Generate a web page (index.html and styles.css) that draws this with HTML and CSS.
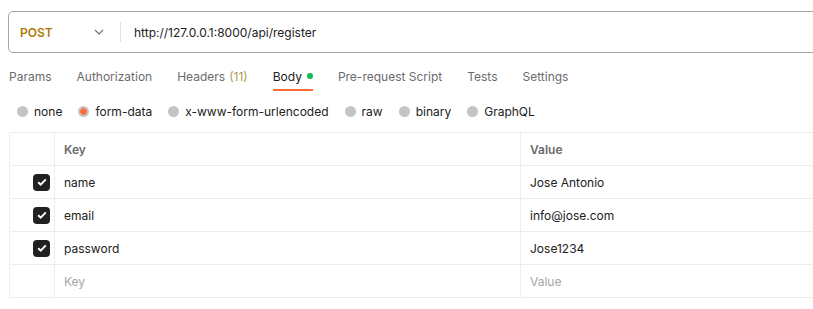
FILE: index.html
```html
<!DOCTYPE html>
<html lang="en">
<head>
  <meta charset="UTF-8">
  <meta name="viewport" content="width=device-width, initial-scale=1.0">
  <title>POST register</title>
  <link rel="stylesheet" href="styles.css">
</head>
<body>
  <div class="request-bar">
    <div class="method">
      <span class="method-name">POST</span>
      <svg class="chevron" width="10" height="6" viewBox="0 0 10 6"><path d="M1 1l4 4 4-4" fill="none" stroke="#6b6b6b" stroke-width="1.1"/></svg>
    </div>
    <div class="url">http://127.0.0.1:8000/api/register</div>
  </div>

  <div class="tabs">
    <span class="tab">Params</span>
    <span class="tab">Authorization</span>
    <span class="tab">Headers <span class="count">(11)</span></span>
    <span class="tab active">Body <span class="dot"></span></span>
    <span class="tab">Pre-request Script</span>
    <span class="tab">Tests</span>
    <span class="tab">Settings</span>
  </div>

  <div class="body-types">
    <label class="radio"><span class="circle"></span>none</label>
    <label class="radio selected"><span class="circle"></span>form-data</label>
    <label class="radio"><span class="circle"></span>x-www-form-urlencoded</label>
    <label class="radio"><span class="circle"></span>raw</label>
    <label class="radio"><span class="circle"></span>binary</label>
    <label class="radio"><span class="circle"></span>GraphQL</label>
  </div>

  <div class="params">
    <div class="row head">
      <div class="cell check"></div>
      <div class="cell key">Key</div>
      <div class="cell value">Value</div>
    </div>
    <div class="row">
      <div class="cell check"><span class="box"><svg width="10" height="8" viewBox="0 0 10 8"><path d="M1.2 4.2l2.5 2.4L8.8 1.4" fill="none" stroke="#fff" stroke-width="2"/></svg></span></div>
      <div class="cell key">name</div>
      <div class="cell value">Jose Antonio</div>
    </div>
    <div class="row">
      <div class="cell check"><span class="box"><svg width="10" height="8" viewBox="0 0 10 8"><path d="M1.2 4.2l2.5 2.4L8.8 1.4" fill="none" stroke="#fff" stroke-width="2"/></svg></span></div>
      <div class="cell key">email</div>
      <div class="cell value">info@jose.com</div>
    </div>
    <div class="row">
      <div class="cell check"><span class="box"><svg width="10" height="8" viewBox="0 0 10 8"><path d="M1.2 4.2l2.5 2.4L8.8 1.4" fill="none" stroke="#fff" stroke-width="2"/></svg></span></div>
      <div class="cell key">password</div>
      <div class="cell value">Jose1234</div>
    </div>
    <div class="row empty">
      <div class="cell check"></div>
      <div class="cell key">Key</div>
      <div class="cell value">Value</div>
    </div>
  </div>
</body>
</html>
```

FILE: styles.css
```css
body {
  font-family: 'Inter', 'Liberation Sans', sans-serif;
  font-size: 12px;
  color: #212121;
  background: #fff;
  margin: 0;
  padding: 11px 0 0 8px;
  overflow: hidden;
}
.request-bar {
  display: flex;
  align-items: center;
  height: 40px;
  margin-right: -10px;
  border: 1px solid #a6a6a6;
  border-radius: 5px;
}
.method {
  display: flex;
  align-items: center;
  justify-content: space-between;
  width: 84px;
  height: 20px;
  padding: 0 16px 0 11px;
  border-right: 1px solid #e0e0e0;
}
.method-name {
  font-weight: 600;
  color: #ad7a03;
}
.url {
  padding-left: 13px;
}
.tabs {
  display: flex;
  height: 28px;
  margin-top: 10px;
  padding-left: 1px;
}
.tab {
  display: flex;
  align-items: center;
  margin-right: 25px;
  color: #6b6b6b;
  border-bottom: 2px solid transparent;
}
.tab .count {
  color: #a99a4b;
  margin-left: 4px;
}
.tab.active {
  color: #212121;
  border-bottom-color: #ff6c37;
}
.dot {
  width: 6px;
  height: 6px;
  margin-left: 5px;
  border-radius: 50%;
  background: #0cbb52;
}
.body-types {
  display: flex;
  align-items: center;
  height: 41px;
  padding-left: 9px;
}
.radio {
  display: flex;
  align-items: center;
  margin-right: 16px;
  color: #212121;
}
.circle {
  width: 11px;
  height: 11px;
  margin-right: 6px;
  border-radius: 50%;
  background: #c4c4c4;
}
.radio.selected .circle {
  background: radial-gradient(circle, #ff6c37 0 3px, #c4c4c4 3.6px);
}
.params {
  margin-left: 1px;
  border-top: 1px solid #ededed;
  border-left: 1px solid #ededed;
}
.row {
  display: flex;
  height: 32px;
  border-bottom: 1px solid #ededed;
}
.cell {
  display: flex;
  align-items: center;
}
.check {
  width: 44px;
  justify-content: flex-end;
  border-right: 1px solid #ededed;
}
.key {
  width: 456px;
  padding-left: 9px;
  border-right: 1px solid #ededed;
}
.value {
  flex: 1;
  padding-left: 9px;
}
.head .cell {
  font-weight: 600;
  color: #6b6b6b;
}
.empty .key,
.empty .value {
  color: #a6a6a6;
}
.box {
  display: flex;
  align-items: center;
  justify-content: center;
  width: 17px;
  height: 17px;
  margin-right: 4px;
  border-radius: 4px;
  background: #212121;
}
```
